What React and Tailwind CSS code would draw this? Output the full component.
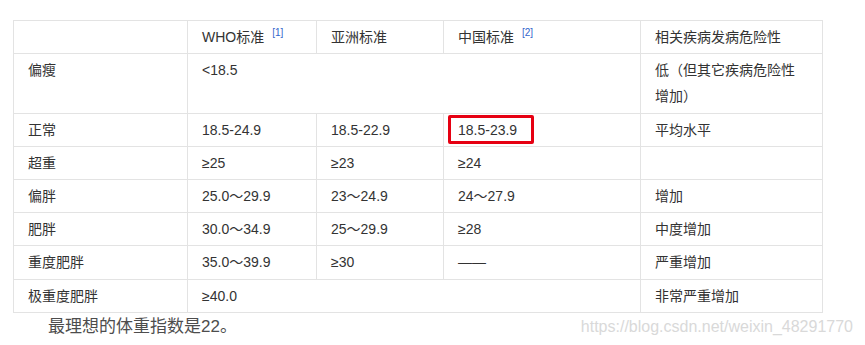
import React from 'react'

const rows = [
  { name: '正常', who: '18.5-24.9', asia: '18.5-22.9', china: '18.5-23.9', risk: '平均水平', mark: true },
  { name: '超重', who: '≥25', asia: '≥23', china: '≥24', risk: '' },
  { name: '偏胖', who: '25.0～29.9', asia: '23～24.9', china: '24～27.9', risk: '增加' },
  { name: '肥胖', who: '30.0～34.9', asia: '25～29.9', china: '≥28', risk: '中度增加' },
  { name: '重度肥胖', who: '35.0～39.9', asia: '≥30', china: '——', risk: '严重增加' },
]

const cell = 'border border-[#e3e3e3] px-[14px] py-[3px] align-top text-left font-normal'

function Ref({ n }) {
  return <sup className="ml-[8px] text-[10px] text-[#3366cc] align-[1px]">[{n}]</sup>
}

export default function App() {
  return (
    <div className="w-[865px] h-[345px] bg-white font-['Liberation_Sans','Noto_Sans_CJK_SC',sans-serif] text-[14px] leading-[26.2px] text-[#333]">
      <div className="pt-[20px] pl-[13px]">
        <table className="border-collapse table-fixed w-[809px]">
          <colgroup>
            <col className="w-[174px]" />
            <col className="w-[129px]" />
            <col className="w-[127px]" />
            <col className="w-[197px]" />
            <col className="w-[182px]" />
          </colgroup>
          <thead>
            <tr>
              <th className={cell}></th>
              <th className={cell}>WHO标准<Ref n={1} /></th>
              <th className={cell}>亚洲标准</th>
              <th className={cell}>中国标准<Ref n={2} /></th>
              <th className={cell}>相关疾病发病危险性</th>
            </tr>
          </thead>
          <tbody>
            <tr>
              <td className={cell}>偏瘦</td>
              <td className={cell} colSpan={3}>&lt;18.5</td>
              <td className={cell}>低（但其它疾病危险性增加）</td>
            </tr>
            {rows.map((r) => (
              <tr key={r.name}>
                <td className={cell}>{r.name}</td>
                <td className={cell}>{r.who}</td>
                <td className={cell}>{r.asia}</td>
                <td className={cell + ' relative'}>
                  {r.china}
                  {r.mark && (
                    <div className="absolute left-[4px] top-[1px] w-[86px] h-[29px] border-[3px] border-[#e60012] rounded-[2px]" />
                  )}
                </td>
                <td className={cell}>{r.risk}</td>
              </tr>
            ))}
            <tr>
              <td className={cell}>极重度肥胖</td>
              <td className={cell} colSpan={3}>≥40.0</td>
              <td className={cell}>非常严重增加</td>
            </tr>
          </tbody>
        </table>
      </div>
      <div className="flex items-center justify-between pl-[48px] pr-[12px] pt-[1px]">
        <p className="text-[17px] leading-[26px] text-[#4d4d4d]">
          最理想的体重指数是22。
        </p>
        <span className="text-[16px] text-[#d9d9d9]">https://blog.csdn.net/weixin_48291770</span>
      </div>
    </div>
  )
}
